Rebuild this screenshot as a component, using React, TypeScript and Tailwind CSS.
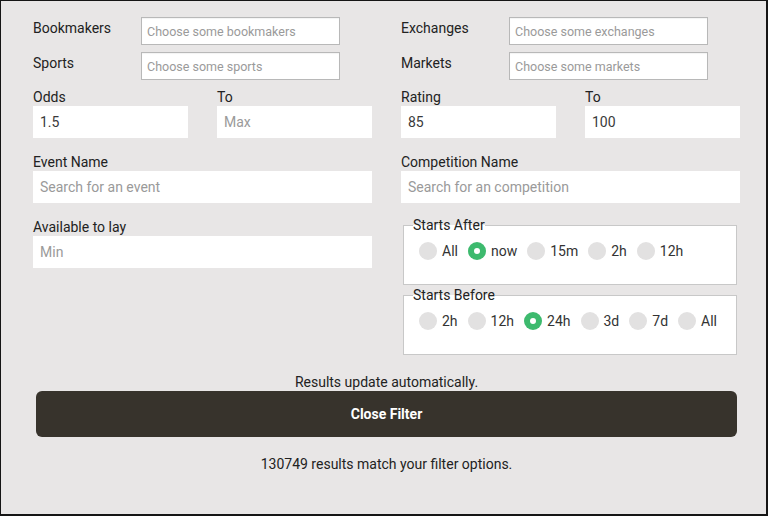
import { useState } from 'react'

const font = { fontFamily: 'Roboto, "Liberation Sans", sans-serif' }

function SelectRow({ label, placeholder }: { label: string; placeholder: string }) {
  return (
    <div className="flex items-start">
      <div className="w-[108px] pt-[3px] text-[14px] leading-[16px] text-[#222]">{label}</div>
      <div className="flex h-[28px] w-[199px] items-center border border-[#b8b8b8] bg-white px-[5px] pt-[2px] text-[12.5px] text-[#9a9a9a] shadow-[inset_0_1px_1px_rgba(0,0,0,0.05)]">
        {placeholder}
      </div>
    </div>
  )
}

function Field({ label, value, placeholder, className = '' }: { label: string; value?: string; placeholder?: string; className?: string }) {
  return (
    <div className={className}>
      <div className="mb-[1px] h-[16px] text-[14px] leading-[16px] text-[#222]">{label}</div>
      <div className={`flex h-[32px] items-center bg-white px-[7px] text-[14px] ${value ? 'text-[#3a3a3a]' : 'text-[#9a9a9a]'}`}>
        {value || placeholder}
      </div>
    </div>
  )
}

function RadioGroup({ legend, options, selected, onChange, className = '' }: { legend: string; options: string[]; selected: string; onChange: (v: string) => void; className?: string }) {
  return (
    <fieldset className={`border border-[#c8c8c8] bg-white pl-[15px] ${className}`}>
      <legend className="ml-[-6px] px-0 text-[14px] leading-[16px] text-[#222]">{legend}</legend>
      <div className="mt-[9px] mb-[24px] flex h-[18px] items-center">
        {options.map((opt) => (
          <button key={opt} onClick={() => onChange(opt)} className="mr-[10px] flex items-center text-[14px] text-[#333]">
            {opt === selected ? (
              <span className="flex h-[18px] w-[18px] items-center justify-center rounded-full bg-[#3dba6e]">
                <span className="h-[6px] w-[6px] rounded-full bg-white" />
              </span>
            ) : (
              <span className="h-[18px] w-[18px] rounded-full bg-[#e2e1e1]" />
            )}
            <span className="ml-[5px]">{opt}</span>
          </button>
        ))}
      </div>
    </fieldset>
  )
}

export default function App() {
  const [after, setAfter] = useState('now')
  const [before, setBefore] = useState('24h')

  return (
    <div style={font} className="h-[516px] w-[768px] border border-r-2 border-b-2 border-[#151515] bg-[#e8e6e6] pt-[16px] pl-[32px] pr-[26px]">
      <div className="grid grid-cols-2 gap-x-[29px]">
        <div>
          <SelectRow label="Bookmakers" placeholder="Choose some bookmakers" />
          <div className="mt-[7px]">
            <SelectRow label="Sports" placeholder="Choose some sports" />
          </div>
          <div className="mt-[9px] flex gap-[29px]">
            <Field label="Odds" value="1.5" className="flex-1" />
            <Field label="To" placeholder="Max" className="flex-1" />
          </div>
          <Field label="Event Name" placeholder="Search for an event" className="mt-[16px]" />
          <Field label="Available to lay" placeholder="Min" className="mt-[16px]" />
        </div>

        <div>
          <SelectRow label="Exchanges" placeholder="Choose some exchanges" />
          <div className="mt-[7px]">
            <SelectRow label="Markets" placeholder="Choose some markets" />
          </div>
          <div className="mt-[9px] flex gap-[29px]">
            <Field label="Rating" value="85" className="flex-1" />
            <Field label="To" value="100" className="flex-1" />
          </div>
          <Field label="Competition Name" placeholder="Search for an competition" className="mt-[16px]" />
          <RadioGroup legend="Starts After" options={['All', 'now', '15m', '2h', '12h']} selected={after} onChange={setAfter} className="mt-[14px] ml-[2px] mr-[3px]" />
          <RadioGroup legend="Starts Before" options={['2h', '12h', '24h', '3d', '7d', 'All']} selected={before} onChange={setBefore} className="mt-[2px] ml-[2px] mr-[3px]" />
        </div>
      </div>

      <p className="mt-[19px] text-center text-[14px] leading-[16px] text-[#222]">Results update automatically.</p>
      <button className="mx-[3px] mt-[1px] flex h-[46px] w-[calc(100%-6px)] items-center justify-center rounded-[6px] bg-[#37332c] text-[14px] font-bold text-white">
        Close Filter
      </button>
      <p className="mt-[19px] text-center text-[14px] leading-[16px] text-[#222]">130749 results match your filter options.</p>
    </div>
  )
}
